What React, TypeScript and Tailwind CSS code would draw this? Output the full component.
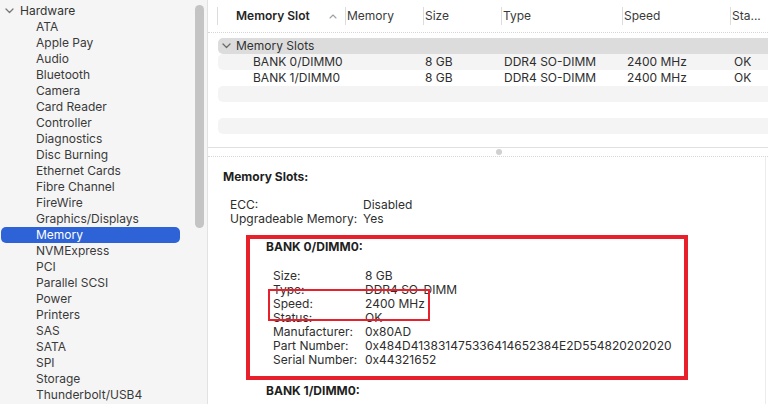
const sidebarItems = [
  "ATA",
  "Apple Pay",
  "Audio",
  "Bluetooth",
  "Camera",
  "Card Reader",
  "Controller",
  "Diagnostics",
  "Disc Burning",
  "Ethernet Cards",
  "Fibre Channel",
  "FireWire",
  "Graphics/Displays",
  "Memory",
  "NVMExpress",
  "PCI",
  "Parallel SCSI",
  "Power",
  "Printers",
  "SAS",
  "SATA",
  "SPI",
  "Storage",
  "Thunderbolt/USB4",
];

const slots = [
  { name: "BANK 0/DIMM0", size: "8 GB", type: "DDR4 SO-DIMM", speed: "2400 MHz", status: "OK" },
  { name: "BANK 1/DIMM0", size: "8 GB", type: "DDR4 SO-DIMM", speed: "2400 MHz", status: "OK" },
];

const details = [
  ["Size:", "8 GB"],
  ["Type:", "DDR4 SO-DIMM"],
  ["Speed:", "2400 MHz"],
  ["Status:", "OK"],
  ["Manufacturer:", "0x80AD"],
  ["Part Number:", "0x484D41383147533641465238 4E2D554820202020".replace(" ", "")],
  ["Serial Number:", "0x44321652"],
];

const Chevron = ({ className }: { className?: string }) => (
  <svg width="9" height="6" viewBox="0 0 9 6" className={className} fill="none">
    <path d="M1 1l3.5 3.5L8 1" stroke="currentColor" strokeWidth="1.3" strokeLinecap="round" strokeLinejoin="round" />
  </svg>
);

const HeaderCell = ({ label, width, bold, children }: { label: string; width?: string; bold?: boolean; children?: React.ReactNode }) => (
  <div className={`flex h-full items-center ${width ?? "flex-1"}`}>
    <div className="h-[18px] w-px bg-[#dcdcdc]" />
    <span className={bold ? "pl-[18px] font-semibold text-[#262626]" : "pl-[1px] text-[#3a3a3a]"}>{label}</span>
    {children}
  </div>
);

export default function App() {
  return (
    <div className="flex h-[404px] w-[768px] overflow-hidden bg-white font-['Inter',sans-serif] text-[12px] leading-4 text-[#2e2e2e]">
      <aside className="flex w-[208px] shrink-0 border-r border-[#e2e2e2] bg-[#f5f5f5]">
        <div className="w-[180px] pl-[1px] pt-[3px]">
          <div className="flex h-4 items-center text-[#333]">
            <Chevron className="ml-[4px] mr-[6px] text-[#777]" />
            <span>Hardware</span>
          </div>
          {sidebarItems.map((item) => (
            <div
              key={item}
              className={`flex h-4 items-center rounded-[5px] pl-[35px] ${item === "Memory" ? "bg-[#2e63d7] text-white" : "text-[#3a3a3a]"}`}
            >
              {item}
            </div>
          ))}
        </div>
        <div className="ml-auto mr-[3px] mt-[5px] h-[223px] w-[9px] rounded-full bg-[#c4c4c4]" />
      </aside>

      <main className="flex flex-1 flex-col">
        <section className="h-[148px] shrink-0 border-b border-[#e0e0e0]">
          <div className="flex h-[33px] border-b border-dotted border-[#d6d6d6] pl-[9px]">
            <HeaderCell label="Memory Slot" width="w-[128px]" bold>
              <svg width="8" height="5" viewBox="0 0 8 5" className="ml-[19px] text-[#a0a0a0]" fill="none">
                <path d="M1 4l3-3 3 3" stroke="currentColor" strokeWidth="1.1" strokeLinecap="round" strokeLinejoin="round" />
              </svg>
            </HeaderCell>
            <HeaderCell label="Memory" width="w-[78px]" />
            <HeaderCell label="Size" width="w-[78px]" />
            <HeaderCell label="Type" width="w-[121px]" />
            <HeaderCell label="Speed" width="w-[108px]" />
            <HeaderCell label="Sta..." />
          </div>

          <div className="pl-[10px] pt-[5px]">
            <div className="flex h-4 items-center rounded-l-[5px] bg-[#dcdcdc] text-[#333]">
              <Chevron className="ml-[4px] mr-[5px] text-[#6b6b6b]" />
              <span>Memory Slots</span>
            </div>
            {slots.map((s, i) => (
              <div key={s.name} className={`flex h-4 items-center rounded-l-[5px] ${i % 2 === 0 ? "bg-[#f4f4f4]" : "bg-white"}`}>
                <span className="w-[127px] pl-[35px]">{s.name}</span>
                <span className="w-[78px]" />
                <span className="w-[78px] pl-[2px]">{s.size}</span>
                <span className="w-[121px] pl-[3px]">{s.type}</span>
                <span className="w-[108px] pl-[5px]">{s.speed}</span>
                <span className="pl-[4px]">{s.status}</span>
              </div>
            ))}
            <div className="h-4 rounded-l-[5px] bg-[#f4f4f4]" />
            <div className="h-4" />
            <div className="h-4 rounded-l-[5px] bg-[#f4f4f4]" />
          </div>
        </section>

        <div className="flex h-[9px] shrink-0 items-center justify-center border-b border-dotted border-[#d6d6d6]">
          <div className="ml-[22px] h-[6px] w-[6px] rounded-full bg-[#d0d0d0]" />
        </div>

        <section className="flex flex-1">
          <div className="flex-1 pl-[15px] pt-[13px] leading-[14px]">
            <div className="font-bold text-[#1f1f1f]">Memory Slots:</div>
            <div className="mt-[14px] pl-[7px]">
              <div className="flex">
                <span className="w-[133px]">ECC:</span>
                <span>Disabled</span>
              </div>
              <div className="flex">
                <span className="w-[133px]">Upgradeable Memory:</span>
                <span>Yes</span>
              </div>

              <div className="relative ml-[16px] mt-[9px] w-[442px] border-[4px] border-[#e8202b] pb-[9px] pl-[16px] pt-[1px]">
                <div className="font-bold text-[#1f1f1f]">BANK 0/DIMM0:</div>
                <div className="mt-[15px] pl-[7px]">
                  {details.map(([label, value]) => (
                    <div key={label} className="flex">
                      <span className="w-[92px]">{label}</span>
                      <span>{value}</span>
                    </div>
                  ))}
                </div>
                <div className="absolute left-[18px] top-[50px] h-[32px] w-[162px] border-2 border-[#e8202b]" />
              </div>

              <div className="ml-[36px] mt-[4px] font-bold text-[#1f1f1f]">BANK 1/DIMM0:</div>
            </div>
          </div>
          <div className="w-[3px] border-l border-[#ececec]" />
        </section>
      </main>
    </div>
  );
}
